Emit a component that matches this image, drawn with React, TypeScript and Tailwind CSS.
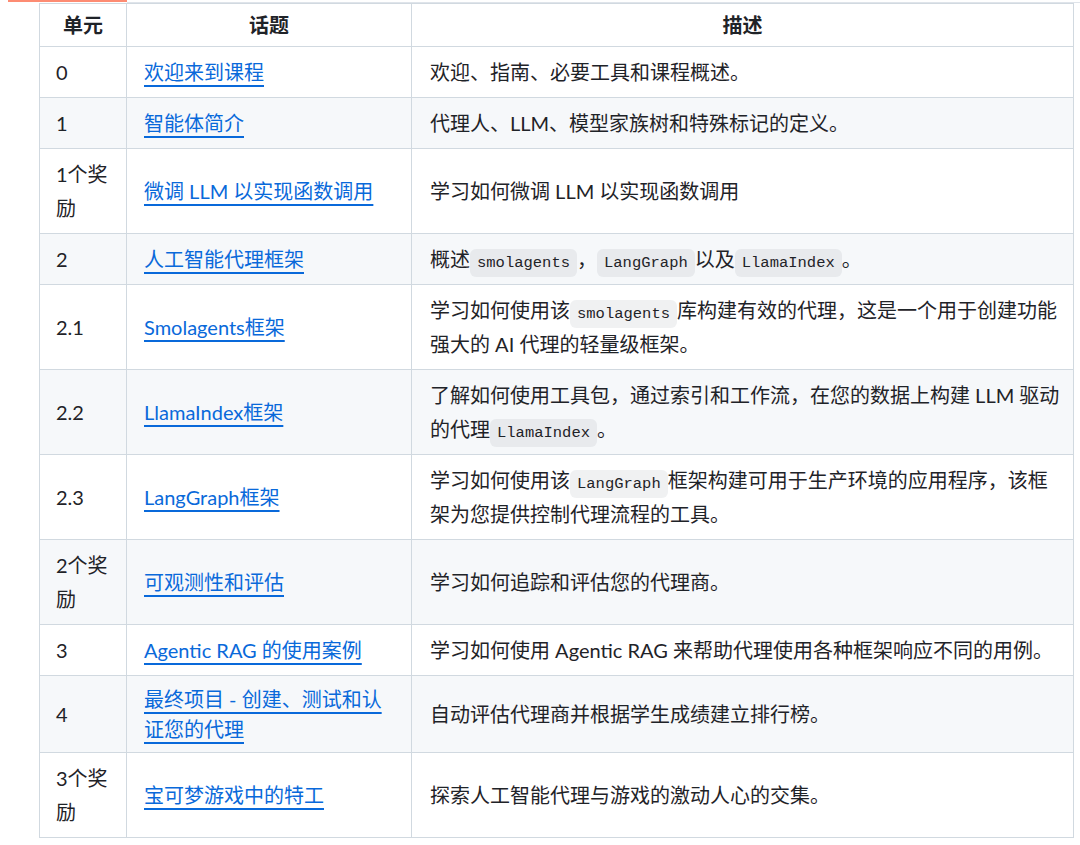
const units = [
  {
    unit: '0',
    topic: '欢迎来到课程',
    desc: ['欢迎、指南、必要工具和课程概述。'],
  },
  {
    unit: '1',
    topic: '智能体简介',
    desc: ['代理人、LLM、模型家族树和特殊标记的定义。'],
  },
  {
    unit: '1个奖励',
    topic: '微调 LLM 以实现函数调用',
    desc: ['学习如何微调 LLM 以实现函数调用'],
  },
  {
    unit: '2',
    topic: '人工智能代理框架',
    desc: ['概述', { code: 'smolagents' }, '，', { code: 'LangGraph' }, '以及', { code: 'LlamaIndex' }, '。'],
  },
  {
    unit: '2.1',
    topic: 'Smolagents框架',
    desc: ['学习如何使用该', { code: 'smolagents' }, '库构建有效的代理，这是一个用于创建功能强大的 AI 代理的轻量级框架。'],
  },
  {
    unit: '2.2',
    topic: 'LlamaIndex框架',
    desc: ['了解如何使用工具包，通过索引和工作流，在您的数据上构建 LLM 驱动的代理', { code: 'LlamaIndex' }, '。'],
  },
  {
    unit: '2.3',
    topic: 'LangGraph框架',
    desc: ['学习如何使用该', { code: 'LangGraph' }, '框架构建可用于生产环境的应用程序，该框架为您提供控制代理流程的工具。'],
  },
  {
    unit: '2个奖励',
    topic: '可观测性和评估',
    desc: ['学习如何追踪和评估您的代理商。'],
  },
  {
    unit: '3',
    topic: 'Agentic RAG 的使用案例',
    desc: ['学习如何使用 Agentic RAG 来帮助代理使用各种框架响应不同的用例。'],
  },
  {
    unit: '4',
    topic: '最终项目 - 创建、测试和认证您的代理',
    desc: ['自动评估代理商并根据学生成绩建立排行榜。'],
  },
  {
    unit: '3个奖励',
    topic: '宝可梦游戏中的特工',
    desc: ['探索人工智能代理与游戏的激动人心的交集。'],
  },
];

type Part = string | { code: string };

function Code({ children }: { children: string }) {
  return (
    <code className="rounded-md bg-[#818b981f] px-[7px] py-[5px] font-['Liberation_Mono',monospace] text-[15.5px] leading-none">
      {children}
    </code>
  );
}

function Desc({ parts }: { parts: Part[] }) {
  return (
    <>
      {parts.map((p, i) =>
        typeof p === 'string' ? <span key={i}>{p}</span> : <Code key={i}>{p.code}</Code>,
      )}
    </>
  );
}

export default function App() {
  return (
    <div className="min-h-[845px] bg-white font-['Lato','Noto_Sans_CJK_SC',sans-serif] text-[20px] text-[#1f2328]">
      {/* tab strip */}
      <div className="flex h-[3px]">
        <div className="ml-2 h-[2px] w-[119px] bg-[#fd8c73]" />
        <div className="flex-1 border-b border-[#dfe4ea]" />
      </div>

      <table className="ml-[39px] w-[1034px] table-fixed border-collapse">
        <colgroup>
          <col className="w-[87px]" />
          <col className="w-[285px]" />
          <col className="w-[662px]" />
        </colgroup>
        <thead>
          <tr>
            {['单元', '话题', '描述'].map((h) => (
              <th
                key={h}
                className="border border-[#d1d9e0] px-[17px] py-[8px] text-center leading-[26px] font-bold"
              >
                {h}
              </th>
            ))}
          </tr>
        </thead>
        <tbody>
          {units.map((row, i) => (
            <tr key={row.unit} className={i % 2 === 1 ? 'bg-[#f6f8fa]' : 'bg-white'}>
              <td className="border border-[#d1d9e0] px-[16px] py-[8px] align-middle leading-[34px]">
                {row.unit}
              </td>
              <td className="border border-[#d1d9e0] px-[17px] py-[8px] align-middle leading-[30px]">
                <a
                  href="#"
                  className="text-[#0969da] underline decoration-[1.5px] underline-offset-[5px]"
                >
                  {row.topic}
                </a>
              </td>
              <td className="border border-[#d1d9e0] py-[8px] pr-[10px] pl-[18px] align-middle leading-[34px]">
                <Desc parts={row.desc as Part[]} />
              </td>
            </tr>
          ))}
        </tbody>
      </table>
    </div>
  );
}
